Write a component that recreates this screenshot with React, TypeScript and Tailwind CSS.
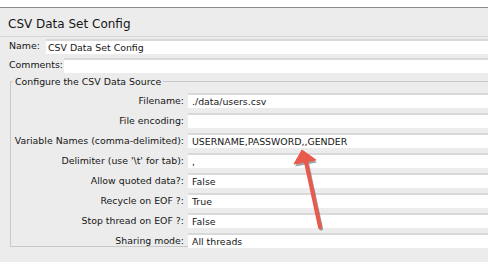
import React from 'react';

const rows: { label: string; value: string }[] = [
  { label: 'Filename:', value: './data/users.csv' },
  { label: 'File encoding:', value: '' },
  { label: 'Variable Names (comma-delimited):', value: 'USERNAME,PASSWORD,,GENDER' },
  { label: "Delimiter (use '\\t' for tab):", value: ',' },
  { label: 'Allow quoted data?:', value: 'False' },
  { label: 'Recycle on EOF ?:', value: 'True' },
  { label: 'Stop thread on EOF ?:', value: 'False' },
  { label: 'Sharing mode:', value: 'All threads' },
];

const Field: React.FC<{ value: string; pad?: string }> = ({ value, pad = 'pl-[3px]' }) => (
  <div className="flex-1 h-[15px] border-t-2 border-[#d9d9d9] bg-white flex items-center">
    <span className={`${pad} leading-none whitespace-nowrap`}>{value}</span>
  </div>
);

const App: React.FC = () => {
  return (
    <div
      className="relative w-[488px] h-[267px] bg-white overflow-hidden text-[9.4px] text-[#161616]"
      style={{ fontFamily: '"DejaVu Sans", "Liberation Sans", sans-serif' }}
    >
      <div className="h-[7px] bg-white" />
      <div className="border-t border-[#8c8c8c] bg-[#ececec] h-[255px] flex flex-col">
        {/* Title */}
        <div className="h-[28px] pl-[8px] flex items-center text-[12px] pt-[3px]">CSV Data Set Config</div>

        {/* Name */}
        <div className="h-[20px] flex items-center border-t border-[#d6d6d6]">
          <span className="pl-[9px] w-[46px]">Name:</span>
          <Field value="CSV Data Set Config" pad="pl-[2px]" />
        </div>

        {/* Comments */}
        <div className="h-[19px] flex items-center">
          <span className="pl-[9px] w-[64px]">Comments:</span>
          <Field value="" />
        </div>

        {/* Fieldset */}
        <fieldset className="ml-[10px] mt-[2px] border border-r-0 border-[#c9c9c9] pl-0 pb-[4px] h-[170px]">
          <legend className="ml-[2px] px-[2px] leading-none">Configure the CSV Data Source</legend>
          <div className="flex flex-col gap-[5px] mt-[7px]">
            {rows.map((r) => (
              <div key={r.label} className="flex items-center h-[15px]">
                <span className="w-[176px] text-right pr-[3px] whitespace-nowrap">{r.label}</span>
                <div className="flex-1 flex pl-[1px]">
                  <Field value={r.value} pad="pl-[4px]" />
                </div>
              </div>
            ))}
          </div>
        </fieldset>
      </div>

      {/* Annotation arrow */}
      <svg className="absolute inset-0 pointer-events-none" width="488" height="267" viewBox="0 0 488 267">
        <g transform="translate(1,1.5)" opacity="0.45">
          <line x1="306" y1="162" x2="320" y2="227" stroke="#333" strokeWidth="4" strokeLinecap="round" />
          <polygon points="302,151 294,165 316,161" fill="#333" />
        </g>
        <line x1="306" y1="162" x2="320" y2="227" stroke="#e85b4c" strokeWidth="4" strokeLinecap="round" />
        <polygon points="302,150 294,164 316,160" fill="#e85b4c" stroke="#e85b4c" strokeWidth="1" strokeLinejoin="round" />
      </svg>
    </div>
  );
};

export default App;
